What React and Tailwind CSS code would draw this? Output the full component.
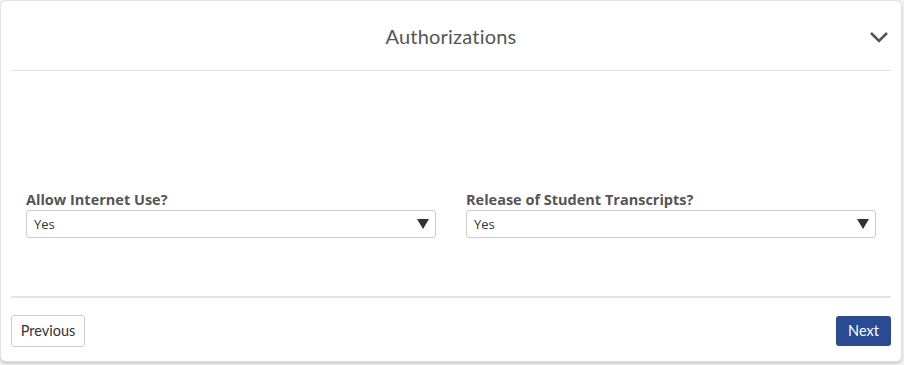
import React from "react";

const Field = ({ label, value }) => (
  <div className="flex flex-col">
    <label className="text-[14.5px] font-bold text-[#555] leading-[16px] mb-[2px]" style={{ fontFamily: "'Open Sans', sans-serif" }}>
      {label}
    </label>
    <div className="h-[28px] border border-[#ccc] rounded-[3px] flex items-center justify-between pl-[7px] pr-[6px] pt-[2px] bg-white">
      <span className="text-[13px] text-[#333]" style={{ fontFamily: "'Open Sans', sans-serif" }}>{value}</span>
      <svg width="12" height="10" viewBox="0 0 12 10" className="-mt-[2px]">
        <path d="M0 0 L12 0 L6 10 Z" fill="#333" />
      </svg>
    </div>
  </div>
);

export default function App() {
  return (
    <div className="w-[904px] h-[365px] bg-[#f2f2f2]" style={{ fontFamily: "Lato, 'Open Sans', sans-serif" }}>
      <div className="w-[902px] h-[362px] bg-white rounded-[6px] border border-[#e2e2e2] shadow-[0_2px_3px_rgba(0,0,0,0.15)] flex flex-col">
        <div className="relative h-[69px] flex items-center justify-center">
          <h2 className="text-[20px] text-[#555] tracking-[0.2px]">Authorizations</h2>
          <svg className="absolute right-[12px] top-[30px]" width="20" height="12" viewBox="0 0 20 12">
            <path d="M2 2 L10 10 L18 2" fill="none" stroke="#555" strokeWidth="2.6" />
          </svg>
        </div>
        <div className="mx-[10px] h-px bg-[#e3e3e3]" />
        <div className="mx-[10px] px-[15px] pt-[121px] grid grid-cols-2 gap-x-[30px]">
          <Field label="Allow Internet Use?" value="Yes" />
          <Field label="Release of Student Transcripts?" value="Yes" />
        </div>
        <div className="mx-[10px] mt-[58px] h-[2px] bg-[#e3e3e3]" />
        <div className="mx-[10px] mt-[17px] flex items-center justify-between">
          <button className="h-[32px] w-[74px] border border-[#ccc] rounded-[3px] bg-white text-[14.5px] text-[#333]">Previous</button>
          <button className="h-[30px] w-[55px] rounded-[3px] bg-[#284b93] text-[14.5px] text-white">Next</button>
        </div>
      </div>
    </div>
  );
}
